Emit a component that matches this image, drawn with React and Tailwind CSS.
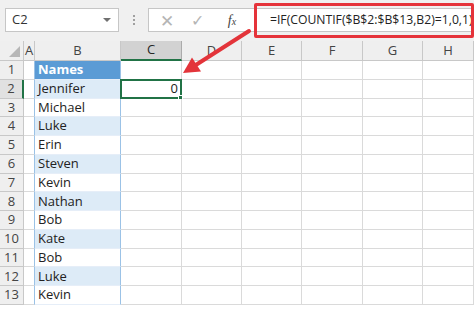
import React from 'react'

const names = ['Jennifer', 'Michael', 'Luke', 'Erin', 'Steven', 'Kevin', 'Nathan', 'Bob', 'Kate', 'Bob', 'Luke', 'Kevin']
const letters = ['A', 'B', 'C', 'D', 'E', 'F', 'G', 'H']

function HeaderRow() {
  return (
    <>
      <div className="relative h-[20px] bg-[#efefef] border-r border-b border-[#c8c8c8]">
        <div className="absolute right-[3px] bottom-[3px] w-0 h-0 border-l-[11px] border-l-transparent border-b-[11px] border-b-[#b7b7b7]" />
      </div>
      {letters.map((l) => (
        <div
          key={l}
          className={
            l === 'C'
              ? 'h-[20px] flex items-center justify-center bg-[#d2d2d2] border-r border-[#ababab] border-b-2 border-b-[#217346] text-[#262626]'
              : 'h-[20px] flex items-center justify-center bg-[#efefef] border-r border-b border-[#c8c8c8] text-[#444]'
          }
        >
          {l}
        </div>
      ))}
    </>
  )
}

function Row({ n }) {
  const name = n === 1 ? 'Names' : names[n - 2]
  const bBg = n === 1 ? 'bg-[#5b9bd5] text-white font-bold' : n % 2 === 0 ? 'bg-[#ddebf7] text-[#222]' : 'bg-white text-[#222]'
  return (
    <>
      <div
        className={
          n === 2
            ? 'h-[18.77px] flex items-center justify-center bg-[#e1e1e1] border-b border-[#c8c8c8] border-r-2 border-r-[#217346] text-[#444]'
            : 'h-[18.77px] flex items-center justify-center bg-[#efefef] border-r border-b border-[#c8c8c8] text-[#444]'
        }
      >
        {n}
      </div>
      <div className="h-[18.77px] border-r border-r-[#9bc2e6] border-b border-[#dadada]" />
      <div className={`h-[18.77px] flex items-center pl-[3px] border-r border-[#9bc2e6] border-b border-b-[#e6eef8] ${bBg}`}>
        {name}
      </div>
      <div className="relative h-[18.77px] border-r border-b border-[#dadada]">
        {n === 2 && (
          <div className="absolute -left-px -top-px -right-px -bottom-px border-2 border-[#217346] flex items-center justify-end pr-[2px] text-[#222]">
            0
            <div className="absolute -right-[3px] -bottom-[3px] w-[5px] h-[5px] bg-[#217346] border border-white" />
          </div>
        )}
      </div>
      {[0, 1, 2, 3, 4].map((i) => (
        <div key={i} className="h-[18.77px] border-r border-b border-[#dadada]" />
      ))}
    </>
  )
}

export default function App() {
  return (
    <div className="relative w-[474px] h-[310px] overflow-hidden bg-white text-[13px]" style={{ fontFamily: '"Open Sans", "Noto Sans", sans-serif' }}>
      {/* toolbar */}
      <div className="h-[41px] bg-[#f0f0f0] flex items-start pt-[8px] pl-[5px]">
        <div className="w-[114px] h-[24px] bg-white border border-[#c6c6c6] flex items-center justify-between pl-[6px] pr-[7px] text-[#333]">
          <span>C2</span>
          <div className="w-0 h-0 border-l-[4px] border-r-[4px] border-t-[4px] border-l-transparent border-r-transparent border-t-[#707070]" />
        </div>
        <div className="w-[29px] h-[24px] flex flex-col items-center justify-center gap-[2px]">
          <div className="w-[2px] h-[2px] bg-[#a0a0a0]" />
          <div className="w-[2px] h-[2px] bg-[#a0a0a0]" />
          <div className="w-[2px] h-[2px] bg-[#a0a0a0]" />
        </div>
        <div className="flex-1 h-[24px] bg-white border border-[#c6c6c6] border-r-0 flex items-center">
          <span className="w-[36px] text-center text-[#b5b5b5] text-[17px] leading-none">✕</span>
          <span className="w-[24px] text-center text-[#b5b5b5] text-[16px] leading-none">✓</span>
          <span className="w-[46px] text-center text-[#444] italic text-[14px]" style={{ fontFamily: '"Liberation Serif", serif' }}>
            f<span className="text-[10px]">x</span>
          </span>
          <span className="pl-[15px] text-[12.2px] text-[#222] whitespace-nowrap">=IF(COUNTIF($B$2:$B$13,B2)=1,0,1)</span>
        </div>
      </div>

      {/* grid */}
      <div className="grid grid-cols-[24px_11px_86px_61px_60px_60px_61px_60px_1fr] text-[13px]">
        <HeaderRow />
        {Array.from({ length: 13 }, (_, i) => (
          <Row key={i} n={i + 1} />
        ))}
      </div>

      {/* highlight box around formula */}
      <div className="absolute left-[254px] top-[3px] w-[220px] h-[35px] border-[3px] border-[#e5333a] rounded-[2px]" />

      {/* arrow */}
      <svg className="absolute left-0 top-0 pointer-events-none" width="474" height="310">
        <line x1="249" y1="31" x2="195" y2="65.5" stroke="#e3343a" strokeWidth="4" strokeLinecap="round" />
        <polygon points="183,73 192,57.5 201,71.5" fill="#e3343a" />
      </svg>
    </div>
  )
}
